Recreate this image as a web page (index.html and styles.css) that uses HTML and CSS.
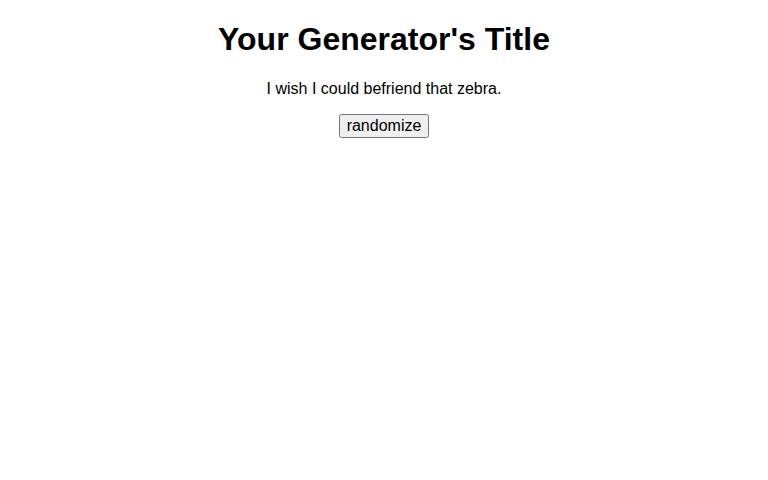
FILE: index.html
```html
<!DOCTYPE html>
<html>
<head>
<meta charset="utf-8">
<title>Generator</title>
<link rel="stylesheet" href="styles.css">
</head>
<body>
<div class="generator">
  <h1 class="title">Your Generator's Title</h1>
  <p class="output">I wish I could befriend that zebra.</p>
  <p class="actions"><button class="randomize">randomize</button></p>
</div>
</body>
</html>
```

FILE: styles.css
```css
body {
  margin: 0 8px 8px;
  font-family: "Liberation Sans", Arial, sans-serif;
  color: #000;
  background: #fff;
}

.generator {
  text-align: center;
}

.title {
  font-size: 32px;
  font-weight: bold;
}

.output {
  font-size: 16px;
}

.randomize {
  font-family: "Liberation Sans", Arial, sans-serif;
  font-size: 16px;
  color: #000;
}
```
